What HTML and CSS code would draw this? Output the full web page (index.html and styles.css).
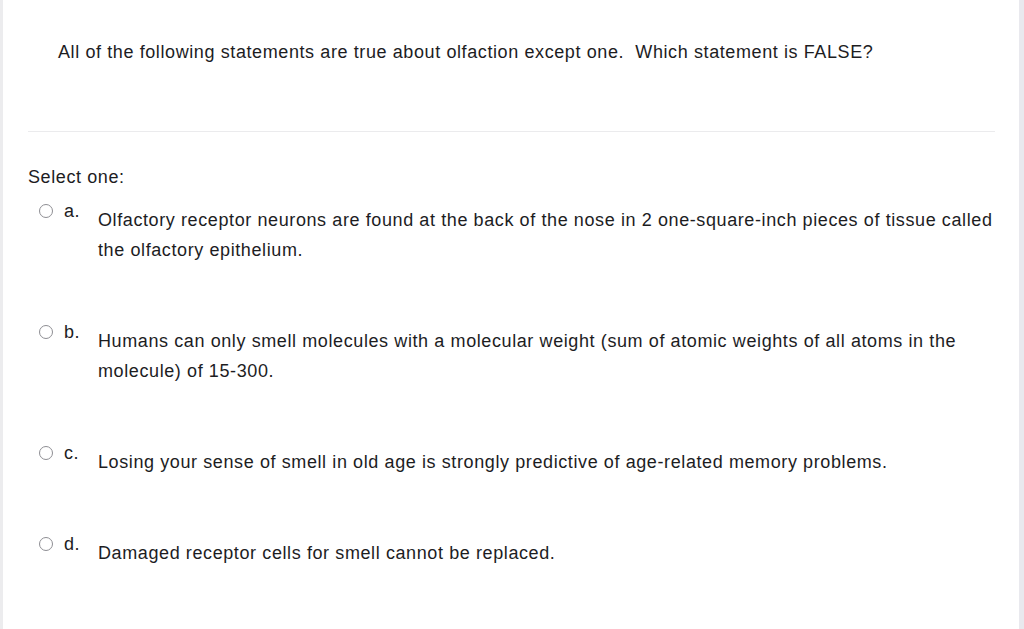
FILE: index.html
```html
<!DOCTYPE html>
<html>
<head>
<meta charset="utf-8">
<link rel="stylesheet" href="styles.css">
</head>
<body>
<div class="page">
  <div class="content">
    <div class="question">All of the following statements are true about olfaction except one.&nbsp; Which statement is FALSE?</div>
    <div class="divider"></div>
    <div class="prompt">Select one:</div>
    <div class="options">
      <div class="option">
        <span class="radio"></span>
        <span class="label">a.</span>
        <div class="text">Olfactory receptor neurons are found at the back of the nose in 2 one-square-inch pieces of tissue called the olfactory epithelium.</div>
      </div>
      <div class="option">
        <span class="radio"></span>
        <span class="label">b.</span>
        <div class="text">Humans can only smell molecules with a molecular weight (sum of atomic weights of all atoms in the molecule) of 15-300.</div>
      </div>
      <div class="option">
        <span class="radio"></span>
        <span class="label">c.</span>
        <div class="text">Losing your sense of smell in old age is strongly predictive of age-related memory problems.</div>
      </div>
      <div class="option">
        <span class="radio"></span>
        <span class="label">d.</span>
        <div class="text">Damaged receptor cells for smell cannot be replaced.</div>
      </div>
    </div>
  </div>
  <div class="scrollbar"></div>
</div>
</body>
</html>
```

FILE: styles.css
```css
html, body {
  margin: 0;
  padding: 0;
  background: #ffffff;
}
body {
  font-family: "Liberation Sans", Arial, Helvetica, sans-serif;
  color: #1d1d1f;
  font-size: 18px;
  letter-spacing: 0.6px;
}
.page {
  display: flex;
  width: 1024px;
  height: 629px;
  overflow: hidden;
}
.content {
  flex: 1;
  border-left: 3px solid #ececee;
  padding-left: 25px;
  padding-right: 18px;
}
.question {
  padding-top: 42px;
  padding-left: 30px;
  line-height: 20px;
  height: 20px;
  white-space: nowrap;
}
.divider {
  margin-top: 69px;
  height: 1px;
  background: #ebebed;
  width: 967px;
}
.prompt {
  margin-top: 35px;
  line-height: 20px;
}
.options {
  margin-top: 14px;
  padding-left: 11px;
}
.option {
  display: flex;
  align-items: flex-start;
  margin-bottom: 57px;
}
.radio {
  flex: none;
  width: 12px;
  height: 12px;
  border: 1px solid #8e8e93;
  border-radius: 50%;
  margin-top: 3px;
  margin-right: 11px;
}
.label {
  flex: none;
  width: 34px;
  line-height: 20px;
}
.text {
  margin-top: 4px;
  line-height: 30px;
}
.scrollbar {
  flex: none;
  width: 5px;
  background: #e9e9ee;
}
```
